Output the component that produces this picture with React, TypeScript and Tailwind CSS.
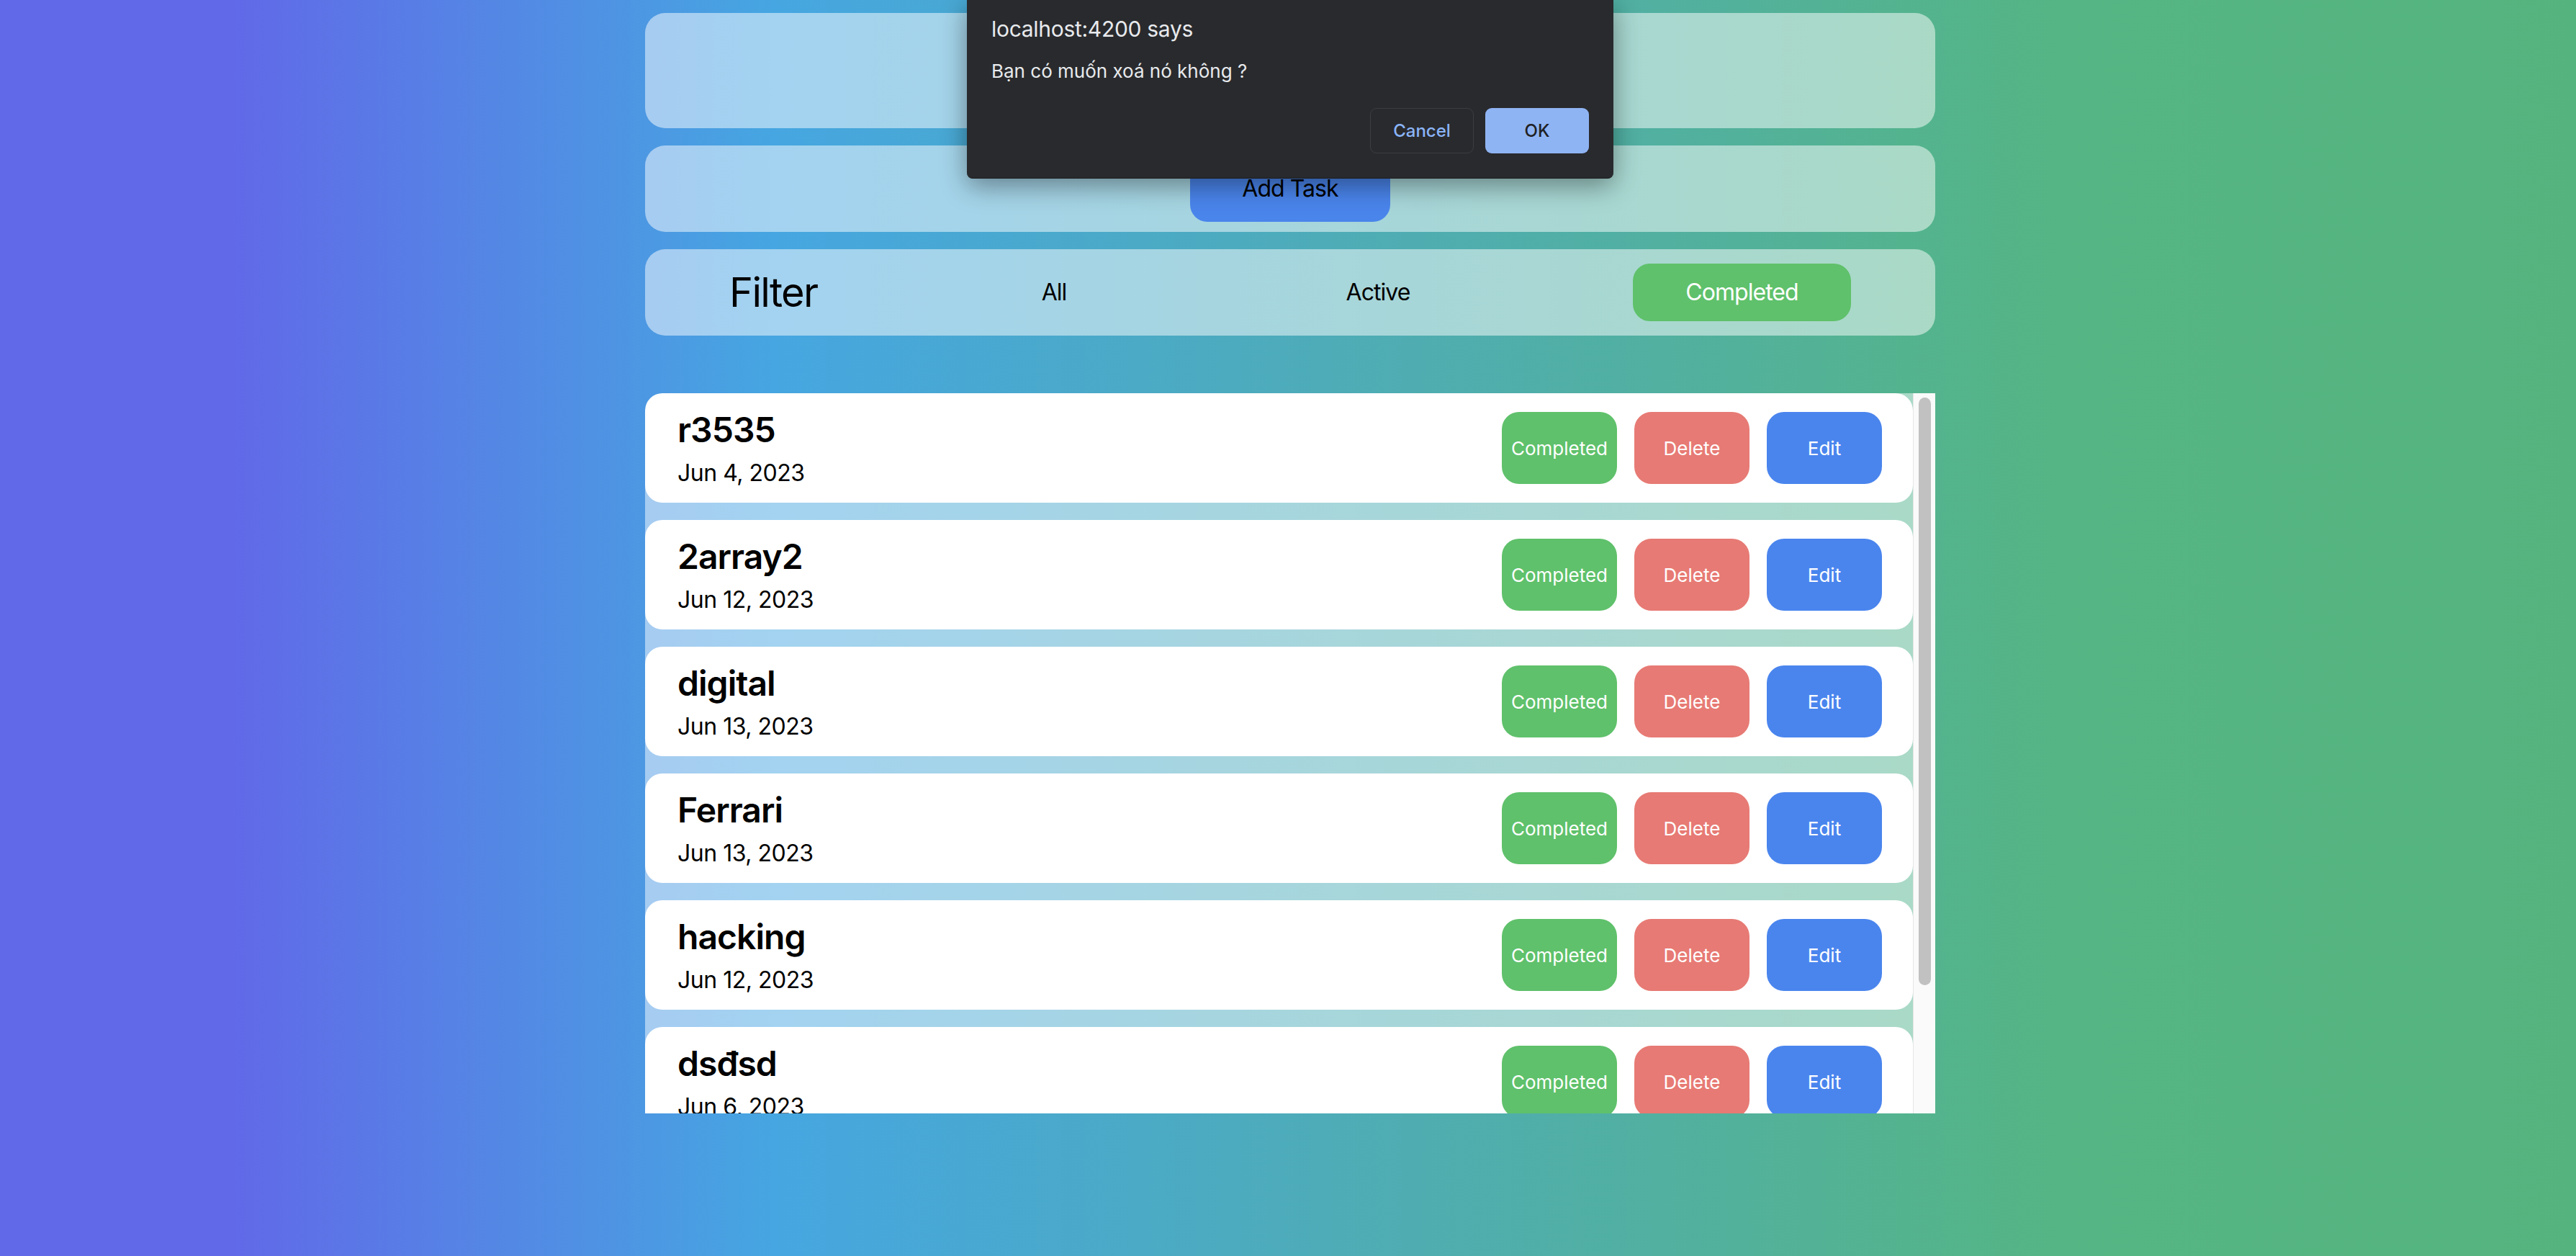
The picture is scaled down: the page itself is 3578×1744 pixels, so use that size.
import React from 'react';

const tasks = [
  { title: 'r3535', date: 'Jun 4, 2023' },
  { title: '2array2', date: 'Jun 12, 2023' },
  { title: 'digital', date: 'Jun 13, 2023' },
  { title: 'Ferrari', date: 'Jun 13, 2023' },
  { title: 'hacking', date: 'Jun 12, 2023' },
  { title: 'dsđsd', date: 'Jun 6, 2023' },
];

function TaskItem({ title, date }: { title: string; date: string }) {
  return (
    <div className="flex h-[152px] shrink-0 items-center justify-between rounded-[24px] bg-white pl-[45px] pr-[43px]">
      <div className="flex flex-col gap-[12px] text-black">
        <span className="text-[48px] font-semibold leading-[58px] tracking-[-0.02em]">{title}</span>
        <span className="text-[32px] leading-[38px] tracking-[-0.015em]">{date}</span>
      </div>
      <div className="flex items-center gap-[24px] text-[26px] text-white">
        <button type="button" className="h-[100px] w-[160px] rounded-[24px] bg-[#5fc16b]">
          Completed
        </button>
        <button type="button" className="h-[100px] w-[160px] rounded-[24px] bg-[#e77a74]">
          Delete
        </button>
        <button type="button" className="h-[100px] w-[160px] rounded-[24px] bg-[#4a85ee]">
          Edit
        </button>
      </div>
    </div>
  );
}

function ConfirmDialog() {
  return (
    <div className="absolute left-[1343px] top-0 flex w-[898px] flex-col rounded-b-[8px] border-b border-[#1b1c1f] bg-[#292a2d] px-[34px] pb-[34px] pt-[22px] text-[#e8eaed] shadow-[0_10px_36px_rgba(0,0,0,0.4)]">
      <div className="text-[30px] leading-[36px] tracking-[-0.01em]">localhost:4200 says</div>
      <div className="mt-[25px] text-[26px] leading-[32px]">Bạn có muốn xoá nó không ?</div>
      <div className="mt-[35px] flex justify-end gap-[16px] text-[24px] font-medium">
        <button
          type="button"
          className="h-[63px] w-[144px] rounded-[9px] border border-[#3c3d41] text-[#8ab4f8]"
        >
          Cancel
        </button>
        <button type="button" className="h-[63px] w-[144px] rounded-[9px] bg-[#8fb4f4] text-[#202124]">
          OK
        </button>
      </div>
    </div>
  );
}

export default function App() {
  return (
    <div className="relative min-h-screen bg-[linear-gradient(90deg,#6169e8_0%,#6169e8_9%,#46a6e1_30%,#4fadb1_55%,#55b584_80%,#55b47e_100%)] font-[Inter,sans-serif]">
      <div className="flex justify-center pl-[6px] pt-[18px]">
        <div className="flex w-[1792px] flex-col">
          {/* Input panel (hidden under dialog) */}
          <div className="h-[160px] rounded-[28px] bg-white/50" />

          {/* Add task */}
          <div className="mt-[24px] flex h-[120px] items-center justify-center rounded-[28px] bg-white/50">
            <button
              type="button"
              className="h-[92px] w-[278px] rounded-[24px] bg-[#4a85ec] text-[32px] tracking-[-0.03em] text-black"
            >
              Add Task
            </button>
          </div>

          {/* Filter */}
          <div className="mt-[24px] flex h-[120px] items-center justify-around rounded-[28px] bg-white/50 text-black">
            <span className="w-[121px] text-center text-[56px] leading-none tracking-[-0.03em]">Filter</span>
            <button type="button" className="h-[80px] w-[192px] rounded-[24px] text-[32px] tracking-[-0.03em]">
              All
            </button>
            <button type="button" className="h-[80px] w-[240px] rounded-[24px] text-[32px] tracking-[-0.03em]">
              Active
            </button>
            <button
              type="button"
              className="h-[80px] w-[303px] rounded-[24px] bg-[#5fc16b] text-[32px] tracking-[-0.03em] text-white"
            >
              Completed
            </button>
          </div>

          {/* Task list */}
          <div className="mt-[80px] flex h-[1000px] overflow-hidden rounded-tl-[24px] bg-white/50">
            <div className="flex flex-1 flex-col gap-[24px] overflow-hidden">
              {tasks.map((t) => (
                <TaskItem key={t.title} title={t.title} date={t.date} />
              ))}
            </div>
            <div className="w-[31px] shrink-0 border-l border-[#e6e6e6] bg-[#fafafa] pl-[7px] pr-[6px] pt-[6px]">
              <div className="h-[816px] rounded-full bg-[#c1c1c1]" />
            </div>
          </div>
        </div>
      </div>

      <ConfirmDialog />
    </div>
  );
}
